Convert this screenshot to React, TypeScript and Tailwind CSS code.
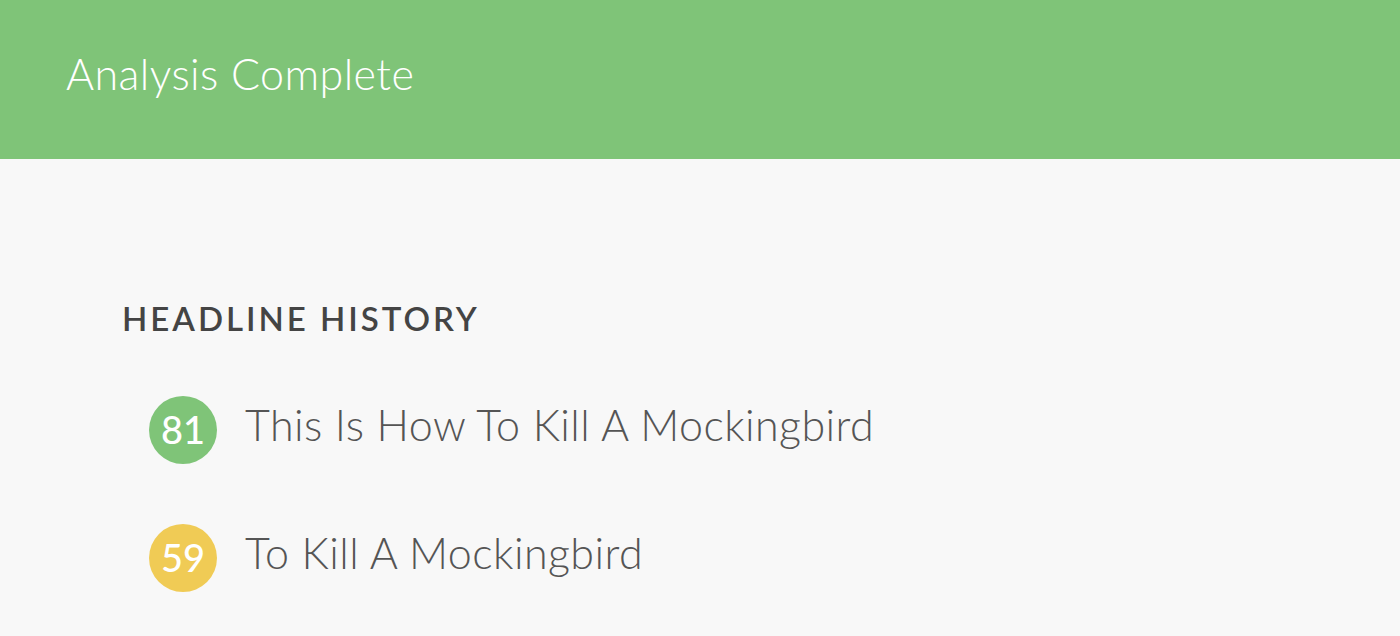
const history = [
  { score: 81, title: "This Is How To Kill A Mockingbird", color: "bg-[#7fc478]" },
  { score: 59, title: "To Kill A Mockingbird", color: "bg-[#f0cb55]" },
];

export default function App() {
  return (
    <div className="min-h-[636px] bg-[#f8f8f8] font-['Lato',sans-serif]">
      <header className="flex h-[159px] items-center bg-[#7fc478] pb-[10px] pl-[66px]">
        <h1 className="text-[43px] font-light tracking-[0.01em] text-white">Analysis Complete</h1>
      </header>
      <section className="pl-[122px] pt-[143px]">
        <h2 className="text-[33px] font-semibold uppercase leading-none tracking-[0.09em] text-[#444]">
          Headline History
        </h2>
        <ul className="mt-[61px] flex flex-col gap-[60px] pl-[27px]">
          {history.map((h) => (
            <li key={h.score} className="flex items-center gap-[28px]">
              <span
                className={`flex h-[68px] w-[68px] shrink-0 items-center justify-center rounded-full pb-[2px] text-[38px] font-medium text-white ${h.color}`}
              >
                {h.score}
              </span>
              <span className="-mt-[10px] text-[43px] font-light tracking-[0.01em] text-[#555]">
                {h.title}
              </span>
            </li>
          ))}
        </ul>
      </section>
    </div>
  );
}
